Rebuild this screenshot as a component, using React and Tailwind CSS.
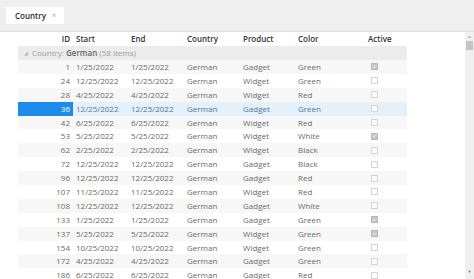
import { Check } from 'lucide-react';

const ROWS = [
  { id: 1, start: '1/25/2022', product: 'Gadget', color: 'Green', active: true },
  { id: 24, start: '12/25/2022', product: 'Widget', color: 'Green', active: false },
  { id: 28, start: '4/25/2022', product: 'Widget', color: 'Red', active: false },
  { id: 36, start: '12/25/2022', product: 'Gadget', color: 'Green', active: false, selected: true },
  { id: 42, start: '6/25/2022', product: 'Widget', color: 'Red', active: false },
  { id: 53, start: '5/25/2022', product: 'Widget', color: 'White', active: true },
  { id: 62, start: '2/25/2022', product: 'Widget', color: 'Black', active: false },
  { id: 72, start: '12/25/2022', product: 'Gadget', color: 'Black', active: false },
  { id: 96, start: '12/25/2022', product: 'Gadget', color: 'Red', active: false },
  { id: 107, start: '11/25/2022', product: 'Widget', color: 'Red', active: false },
  { id: 108, start: '12/25/2022', product: 'Gadget', color: 'White', active: false },
  { id: 133, start: '1/25/2022', product: 'Gadget', color: 'Green', active: true },
  { id: 137, start: '5/25/2022', product: 'Widget', color: 'Green', active: true },
  { id: 154, start: '10/25/2022', product: 'Widget', color: 'Green', active: false },
  { id: 172, start: '4/25/2022', product: 'Gadget', color: 'Green', active: false },
  { id: 186, start: '6/25/2022', product: 'Gadget', color: 'Red', active: false },
];

function Box({ checked }) {
  return (
    <span
      className={
        'w-[7px] h-[7px] flex items-center justify-center border ' +
        (checked ? 'bg-[#c8c8c8] border-[#b8b8b8]' : 'bg-white border-[#d4d4d4]')
      }
    >
      {checked && <Check size={6} strokeWidth={4} className="text-[#eeeeee]" />}
    </span>
  );
}

export default function App() {
  return (
    <div
      className="w-[474px] h-[279px] overflow-hidden bg-white flex flex-col text-[8px] leading-none"
      style={{ fontFamily: '"Open Sans", "Noto Sans", sans-serif' }}
    >
      {/* group panel */}
      <div className="h-[32px] shrink-0 bg-[#efefef] border-b border-[#dedede] flex items-center pl-[6px]">
        <div className="h-[17px] bg-white flex items-center pl-[9px] pr-[8px] gap-[6px]">
          <span className="font-semibold text-[#2b2b2b]">Country</span>
          <span className="text-[7px] text-[#a0a0a0]">×</span>
        </div>
      </div>

      <div className="flex flex-1 min-h-0">
        {/* grid */}
        <div className="flex-1 pl-[18px]">
          <div className="w-[389px]">
            {/* header */}
            <div className="h-[14px] flex items-center font-semibold text-[#333]">
              <div className="w-[55px] pr-[3px] text-right">ID</div>
              <div className="w-[55px] pl-[3px]">Start</div>
              <div className="w-[56px] pl-[3px]">End</div>
              <div className="w-[56px] pl-[3px]">Country</div>
              <div className="w-[55px] pl-[3px]">Product</div>
              <div className="w-[56px] pl-[3px]">Color</div>
              <div className="flex-1 pl-[17px]">Active</div>
            </div>

            {/* group row */}
            <div className="h-[14px] bg-[#ececec] flex items-center pl-[6px] text-[#9a9a9a]">
              <span className="text-[5px] mr-[4px] text-[#b0b0b0]">◢</span>
              <span>Country:&nbsp;</span>
              <span className="font-semibold text-[#666]">German</span>
              <span>&nbsp;(58 items)</span>
            </div>

            {ROWS.map((r, i) => {
              const bg = r.selected ? 'bg-[#e4f0fa]' : i % 2 === 0 ? 'bg-[#f7f7f7]' : 'bg-white';
              const tc = r.selected ? 'text-[#4a7aa3]' : 'text-[#6a6a6a]';
              return (
                <div key={r.id} className={'h-[13.9px] flex items-center ' + bg + ' ' + tc}>
                  <div
                    className={
                      'w-[55px] h-full flex items-center justify-end pr-[3px] ' +
                      (r.selected ? 'bg-[#1d8bea] text-white' : '')
                    }
                  >
                    {r.id}
                  </div>
                  <div className="w-[55px] pl-[3px]">{r.start}</div>
                  <div className="w-[56px] pl-[3px]">{r.start}</div>
                  <div className="w-[56px] pl-[3px]">German</div>
                  <div className="w-[55px] pl-[3px]">{r.product}</div>
                  <div className="w-[56px] pl-[3px]">{r.color}</div>
                  <div className="flex-1 flex justify-center pr-[9px]">
                    <Box checked={r.active} />
                  </div>
                </div>
              );
            })}
          </div>
        </div>

        {/* scrollbar */}
        <div className="w-[9px] bg-[#f0f0f0] flex flex-col items-center">
          <span className="text-[4px] text-[#9a9a9a] mt-[3px]">▲</span>
          <div className="w-[7px] h-[9px] bg-[#c4c4c4] mt-[2px]" />
          <div className="flex-1" />
          <span className="text-[4px] text-[#707070] mb-[5px]">▼</span>
        </div>
      </div>
    </div>
  );
}
